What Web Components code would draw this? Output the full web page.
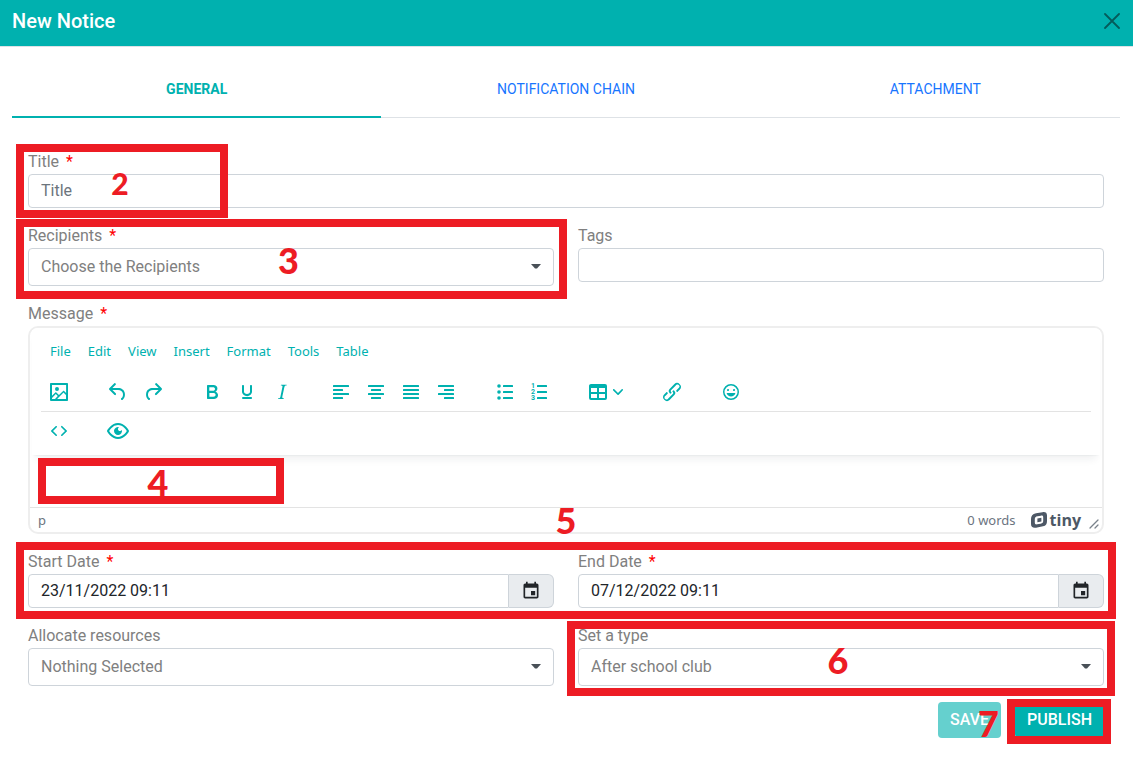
<!DOCTYPE html>
<html lang="en">
<head>
<meta charset="utf-8">
<meta name="viewport" content="width=device-width, initial-scale=1">
<title>New Notice</title>
<style>
  :root {
    --brand: #00b1af;
    --border: #ced4da;
    --muted: #808080;
    --ink: #212529;
    --mark: #ed1c24;
  }

  body {
    margin: 0;
    background: #fff;
    color: var(--ink);
    font: 16px/24px Roboto, "Liberation Sans", sans-serif;
  }

  .form {
    display: grid;
    grid-template-columns: 1fr 1fr;
    gap: 14px 24px;
    padding: 30px 16px 0;
  }

  .wide {
    grid-column: 1 / -1;
  }

  .dates {
    display: grid;
    grid-template-columns: 1fr 1fr;
    gap: 24px;
    position: relative;
  }

  .actions {
    display: flex;
    justify-content: flex-end;
    gap: 14px;
    padding: 16px 16px 24px;
  }

  /* how far each marker reaches round the thing it points at */
  .mark-title { top: -4px; left: -12px; width: 212px; height: 74px; }
  .mark-recipients { inset: -3px -13px -13px -12px; }
  .mark-message { top: 3px; left: 8px; width: 246px; height: 46px; background: #fff; }
  .mark-dates { inset: -6px -12px -11px; }
  .mark-type { inset: -1px -11px -10px; }
  .mark-publish { inset: -3px -7px -6px -8px; }
</style>
</head>
<body>

<notice-dialog heading="New Notice">
  <tab-bar tabs="General,Notification chain,Attachment"></tab-bar>

  <div class="form">
    <text-field class="wide" label="Title" placeholder="Title" required>
      <step-mark class="mark-title" number="2" size="small"></step-mark>
    </text-field>

    <select-field label="Recipients" value="Choose the Recipients" required>
      <step-mark class="mark-recipients" number="3"></step-mark>
    </select-field>
    <text-field label="Tags"></text-field>

    <message-editor class="wide" label="Message">
      <step-mark class="mark-message" number="4"></step-mark>
    </message-editor>

    <div class="wide dates">
      <date-field label="Start Date" value="23/11/2022 09:11" required></date-field>
      <date-field label="End Date" value="07/12/2022 09:11" required></date-field>
      <step-mark class="mark-dates" number="5" place="above"></step-mark>
    </div>

    <select-field label="Allocate resources" value="Nothing Selected"></select-field>
    <select-field label="Set a type" value="After school club">
      <step-mark class="mark-type" number="6"></step-mark>
    </select-field>
  </div>

  <div class="actions">
    <action-button label="SAVE" disabled></action-button>
    <action-button label="PUBLISH">
      <step-mark class="mark-publish" number="7" place="before"></step-mark>
    </action-button>
  </div>
</notice-dialog>

<script>
// shared by every labelled field
const labelStyles = `
  label { display: block; padding-top: 2px; color: var(--muted); line-height: 24px; }
  label span { color: #f00; margin-left: 7px; }
`;

const fieldStyles = `
  * { box-sizing: border-box; }
  :host { display: block; position: relative; min-width: 0; }
  ${labelStyles}
  input, select, button { font: inherit; margin: 0; }
  input {
    display: block;
    width: 100%;
    min-width: 0;
    height: 34px;
    padding: 0 12px 2px;
    border: 1px solid var(--border);
    border-radius: 4px;
    background: #fff;
    color: var(--ink);
  }
  input::placeholder { color: #6c757d; opacity: 1; }
`;

class BaseField extends HTMLElement {
  constructor() {
    super();
    this.attachShadow({ mode: "open" });
  }

  get label() {
    const star = this.hasAttribute("required") ? "<span>*</span>" : "";
    return `<label for="control">${this.getAttribute("label")}${star}</label>`;
  }

  connectedCallback() {
    this.shadowRoot.innerHTML = `<style>${fieldStyles}</style>${this.render()}<slot></slot>`;
  }
}

class TextField extends BaseField {
  render() {
    const placeholder = this.getAttribute("placeholder") || "";
    return `${this.label}<input id="control" type="text" placeholder="${placeholder}">`;
  }
}

class SelectField extends BaseField {
  render() {
    return `
      <style>
        .box { display: grid; align-items: center; }
        .box > * { grid-area: 1 / 1; }
        select {
          appearance: none;
          width: 100%;
          height: 38px;
          padding: 0 32px 0 12px;
          border: 1px solid var(--border);
          border-radius: 4px;
          background: #fff;
          color: var(--muted);
        }
        svg { justify-self: end; margin: 0 13px 2px 0; pointer-events: none; fill: #495057; }
      </style>
      ${this.label}
      <div class="box">
        <select id="control"><option>${this.getAttribute("value")}</option></select>
        <svg width="10" height="5" viewBox="0 0 10 5"><path d="M0 0h10L6 4.5H4z"/></svg>
      </div>`;
  }
}

class DateField extends BaseField {
  render() {
    return `
      <style>
        .box { display: flex; }
        input { border-radius: 4px 0 0 4px; }
        button {
          flex: none;
          display: grid;
          place-items: center;
          width: 45px;
          padding: 0;
          border: 1px solid var(--border);
          border-left: 0;
          border-radius: 0 6px 6px 0;
          background: #e9ecef;
          color: var(--ink);
        }
      </style>
      ${this.label}
      <div class="box">
        <input id="control" type="text" value="${this.getAttribute("value")}">
        <button type="button" aria-label="Pick a date">
          <svg width="20" height="20" viewBox="0 0 24 24" fill="currentColor"><path d="M17 12h-5v5h5v-5zM16 1v2H8V1H6v2H5c-1.1 0-2 .9-2 2v14c0 1.1.9 2 2 2h14c1.1 0 2-.9 2-2V5c0-1.1-.9-2-2-2h-1V1h-2zm3 18H5V8h14v11z"/></svg>
        </button>
      </div>`;
  }
}

class NoticeDialog extends HTMLElement {
  constructor() {
    super();
    this.attachShadow({ mode: "open" });
  }

  connectedCallback() {
    this.shadowRoot.innerHTML = `
      <style>
        :host { display: block; }
        header {
          display: flex;
          align-items: center;
          justify-content: space-between;
          height: 46px;
          padding: 0 13px 4px 12px;
          box-sizing: border-box;
          background: var(--brand);
          color: #fff;
          box-shadow: 0 1px #dee2e6;
        }
        h1 { margin: 0; font-size: 20px; font-weight: 500; line-height: 24px; }
        button { display: grid; padding: 0; border: 0; background: none; }
        main { padding: 16px 13px 0 12px; }
      </style>
      <header>
        <h1>${this.getAttribute("heading")}</h1>
        <button type="button" aria-label="Close">
          <svg width="16" height="16" viewBox="0 0 16 16" stroke="#045c5b" stroke-width="1.8" stroke-linecap="round"><path d="M1 1l14 14M15 1L1 15"/></svg>
        </button>
      </header>
      <main><slot></slot></main>
    `;
  }
}

class TabBar extends HTMLElement {
  constructor() {
    super();
    this.attachShadow({ mode: "open" });
  }

  connectedCallback() {
    const links = this.getAttribute("tabs")
      .split(",")
      .map((name, i) => `<a href="#tab${i}" class="${i === 0 ? "active" : ""}">${name.toUpperCase()}</a>`)
      .join("");

    this.shadowRoot.innerHTML = `
      <style>
        :host { display: block; }
        nav { display: flex; box-shadow: inset 0 -1px #dee2e6; }
        a {
          flex: 1;
          padding: 16px 0;
          border-bottom: 2px solid transparent;
          color: #1775ff;
          font-size: 14px;
          line-height: 22px;
          text-align: center;
          text-decoration: none;
        }
        .active { border-color: var(--brand); color: var(--brand); font-weight: 700; }
      </style>
      <nav>${links}</nav>
    `;
  }
}

class ActionButton extends HTMLElement {
  constructor() {
    super();
    this.attachShadow({ mode: "open" });
  }

  connectedCallback() {
    const disabled = this.hasAttribute("disabled") ? "disabled" : "";
    this.shadowRoot.innerHTML = `
      <style>
        :host { display: block; position: relative; }
        button {
          display: block;
          height: 36px;
          padding: 0 12px;
          border: 0;
          border-radius: 4px;
          background: var(--brand);
          color: #fff;
          font: inherit;
          font-weight: 500;
        }
        button:disabled { opacity: 0.6; }
      </style>
      <button type="button" ${disabled}>${this.getAttribute("label")}</button>
      <slot></slot>
    `;
  }
}

// red frame with its step number, laid over the element that holds it
class StepMark extends HTMLElement {
  constructor() {
    super();
    this.attachShadow({ mode: "open" });
  }

  connectedCallback() {
    this.shadowRoot.innerHTML = `
      <style>
        :host {
          position: absolute;
          z-index: 1;
          box-sizing: border-box;
          display: grid;
          place-content: center;
          border: 8px solid var(--mark);
          pointer-events: none;
        }
        b {
          color: var(--mark);
          font: 900 36px/36px Lato, "Open Sans", sans-serif;
          padding: 2px 6px 0 0;
        }
        :host([size="small"]) b { font-size: 30px; padding-right: 4px; padding-top: 4px; }
        :host([place="above"]) b { position: absolute; justify-self: center; bottom: 100%; margin-bottom: 12px; padding: 0; }
        :host([place="before"]) b { position: absolute; align-self: center; right: 100%; padding-right: 16px; }
      </style>
      <b>${this.getAttribute("number")}</b>
    `;
  }
}

const line = (x, y, w) => `<rect x="${x}" y="${y}" width="${w}" height="2" rx=".6"/>`;
const undoPath = "M6.4 8H12c3.7 0 6.2 2 6.8 5.1.6 2.7-.4 5.6-2.3 6.8a1 1 0 0 1-1-1.8c1.1-.6 1.8-2.7 1.4-4.6-.5-2.1-2.1-3.5-4.9-3.5H6.4l3.3 3.3a1 1 0 1 1-1.4 1.4l-5-5a1 1 0 0 1 0-1.4l5-5a1 1 0 0 1 1.4 1.4L6.4 8Z";

const icons = {
  image: `<path d="m5 15.7 3.3-3.2c.3-.3.7-.3 1 0L12 15l4.1-4c.3-.4.8-.4 1 0l2 1.9V5H5v10.7ZM5 18V19h3l2.8-2.9-2-2L5 17.9Zm14-3-2.5-2.4-6.4 6.5H19v-4ZM4 3h16c.6 0 1 .4 1 1v16c0 .6-.4 1-1 1H4a1 1 0 0 1-1-1V4c0-.6.4-1 1-1Zm6 8a2 2 0 1 0 0-4 2 2 0 0 0 0 4Z"/>`,
  undo: `<path d="${undoPath}"/>`,
  redo: `<path transform="matrix(-1 0 0 1 24 0)" d="${undoPath}"/>`,
  bold: `<path d="M7.8 19c-.3 0-.5 0-.6-.2l-.2-.5V5.7c0-.2 0-.4.2-.5l.6-.2h5c1.5 0 2.7.3 3.5 1 .7.6 1.1 1.4 1.1 2.5a3 3 0 0 1-.6 1.9c-.4.6-1 1-1.6 1.2.4.1.9.3 1.3.6s.8.7 1 1.2c.4.4.5 1 .5 1.6 0 1.3-.4 2.3-1.3 3-.8.7-2.1 1-3.8 1H7.8Zm5-8.3c.6 0 1.2-.1 1.6-.5.4-.3.6-.7.6-1.3 0-1.1-.8-1.7-2.3-1.7H9.3v3.5h3.4Zm.5 6c.7 0 1.3-.1 1.7-.4.4-.4.6-.9.6-1.5s-.2-1-.7-1.4c-.4-.3-1-.4-2-.4H9.4v3.8h4Z"/>`,
  underline: `<path d="M16 5c.6 0 1 .4 1 1v5.5a4 4 0 0 1-.4 1.8l-1 1.4a5.3 5.3 0 0 1-5.5 1 5 5 0 0 1-1.6-1c-.5-.4-.8-.9-1.1-1.4a4 4 0 0 1-.4-1.8V6c0-.6.4-1 1-1s1 .4 1 1v5.5c0 .3 0 .6.2 1l.6.7a3.3 3.3 0 0 0 2.2.8 3.4 3.4 0 0 0 2.2-.8c.3-.2.4-.5.6-.8l.2-.9V6c0-.6.4-1 1-1ZM8 17h8c.6 0 1 .4 1 1s-.4 1-1 1H8a1 1 0 0 1 0-2Z"/>`,
  italic: `<path d="m16.7 4.7-.1.9h-.3c-.6 0-1 0-1.4.3-.3.3-.4.6-.5 1.1l-2.1 9.8v.6c0 .5.4.8 1.4.8h.2l-.2.8H8l.2-.8h.2c1.1 0 1.8-.5 2-1.5l2-9.8.1-.5c0-.6-.4-.8-1.4-.8h-.3l.2-.9h5.8Z"/>`,
  left: line(4, 5, 16) + line(4, 9, 10) + line(4, 13, 16) + line(4, 17, 10),
  center: line(4, 5, 16) + line(7, 9, 10) + line(4, 13, 16) + line(7, 17, 10),
  justify: line(4, 5, 16) + line(4, 9, 16) + line(4, 13, 16) + line(4, 17, 16),
  right: line(4, 5, 16) + line(10, 9, 10) + line(4, 13, 16) + line(10, 17, 10),
  bullets: line(10, 5, 10) + line(10, 11, 10) + line(10, 17, 10) + `<circle cx="6" cy="6" r="1.8"/><circle cx="6" cy="12" r="1.8"/><circle cx="6" cy="18" r="1.8"/>`,
  numbers: line(9, 5, 10) + line(9, 11, 10) + line(9, 17, 10) + `<g font-family="Roboto, sans-serif" font-size="7" font-weight="700"><text x="3" y="8">1</text><text x="3" y="14">2</text><text x="3" y="20">3</text></g>`,
  table: `<path fill-rule="evenodd" d="M19 4a2 2 0 0 1 2 2v12a2 2 0 0 1-2 2H5a2 2 0 0 1-2-2V6c0-1.1.9-2 2-2h14ZM5 14v4h6v-4H5Zm14 0h-6v4h6v-4Zm0-6h-6v4h6V8ZM5 12h6V8H5v4Z"/>`,
  link: `<path d="M6.2 12.3a1 1 0 0 1 1.4 1.4l-2 2a2 2 0 1 0 2.6 2.8l4.8-4.8a1 1 0 0 0 0-1.4 1 1 0 1 1 1.4-1.3 2.9 2.9 0 0 1 0 4L9.6 20a3.9 3.9 0 0 1-5.5-5.5l2-2Zm11.6-.6a1 1 0 0 1-1.4-1.4l2-2a2 2 0 1 0-2.6-2.8L11 10.3a1 1 0 0 0 0 1.4A1 1 0 1 1 9.6 13a2.9 2.9 0 0 1 0-4L14.4 4a3.9 3.9 0 0 1 5.5 5.5l-2 2Z"/>`,
  emoji: `<path d="M9 11c.6 0 1-.4 1-1s-.4-1-1-1a1 1 0 0 0-1 1c0 .6.4 1 1 1Zm6 0c.6 0 1-.4 1-1s-.4-1-1-1a1 1 0 0 0-1 1c0 .6.4 1 1 1Zm-3 5.5c2.1 0 4-1.5 4.4-3.5H7.6c.5 2 2.3 3.5 4.4 3.5ZM12 4a8 8 0 1 0 0 16 8 8 0 0 0 0-16Zm0 14.5a6.5 6.5 0 1 1 0-13 6.5 6.5 0 0 1 0 13Z"/>`,
  code: `<path d="M9.8 15.7c.3.3.3.8 0 1-.3.4-.9.4-1.2 0l-4.4-4.1a.8.8 0 0 1 0-1.2l4.4-4.2c.3-.3.9-.3 1.2 0 .3.3.3.8 0 1.1L6 12l3.8 3.7ZM14.2 15.7c-.3.3-.3.8 0 1 .4.4.9.4 1.2 0l4.4-4.1c.3-.3.3-.9 0-1.2l-4.4-4.2a.8.8 0 0 0-1.2 0c-.3.3-.3.8 0 1.1L18 12l-3.8 3.7Z"/>`,
  preview: `<path d="M3.5 12.5c.5.8 1.1 1.6 1.8 2.3 2 2 4.2 3.2 6.7 3.2s4.7-1.2 6.7-3.2a16.2 16.2 0 0 0 2.1-2.8 15.7 15.7 0 0 0-2.1-2.8c-2-2-4.2-3.2-6.7-3.2a9.3 9.3 0 0 0-6.7 3.2A16.2 16.2 0 0 0 3.2 12c0 .2.2.3.3.5Zm-2.4-1 .7-1.2L4 7.8C6.2 5.4 8.9 4 12 4c3 0 5.8 1.4 8.1 3.8a18.2 18.2 0 0 1 2.8 3.7v1l-.7 1.2a18.2 18.2 0 0 1-2.1 2.5c-2.3 2.4-5 3.8-8.1 3.8-3 0-5.8-1.4-8.1-3.8a18.2 18.2 0 0 1-2.8-3.7 1 1 0 0 1 0-1Zm12-3.3a2 2 0 1 0 2.7 2.6 4 4 0 1 1-2.6-2.6Z"/>`,
};

class ToolButton extends HTMLElement {
  constructor() {
    super();
    this.attachShadow({ mode: "open" });
  }

  connectedCallback() {
    const name = this.getAttribute("icon");
    const arrow = this.hasAttribute("menu")
      ? `<svg width="10" height="10" viewBox="0 0 10 10"><path d="M8.7 2.2c.3-.3.8-.3 1 0 .4.4.4.9 0 1.2L5.7 7.8c-.3.3-.9.3-1.2 0L.2 3.4a.8.8 0 0 1 0-1.2c.3-.3.8-.3 1.1 0L5 6l3.7-3.8Z"/></svg>`
      : "";
    this.shadowRoot.innerHTML = `
      <style>
        :host { display: block; }
        button {
          display: flex;
          align-items: center;
          justify-content: center;
          gap: 3px;
          box-sizing: border-box;
          min-width: 34px;
          height: 34px;
          padding: 0 5px;
          border: 0;
          background: none;
          color: var(--brand);
        }
        :host([menu]) button { padding: 0 7px 0 4px; }
        svg { fill: currentColor; }
      </style>
      <button type="button" aria-label="${name}">
        <svg width="24" height="24" viewBox="0 0 24 24">${icons[name]}</svg>${arrow}
      </button>
    `;
  }
}

class MessageEditor extends HTMLElement {
  constructor() {
    super();
    this.attachShadow({ mode: "open" });
  }

  group(names) {
    const buttons = names
      .map((name) => `<tool-button icon="${name}" ${name === "table" ? "menu" : ""}></tool-button>`)
      .join("");
    return `<div class="group">${buttons}</div>`;
  }

  connectedCallback() {
    const menus = ["File", "Edit", "View", "Insert", "Format", "Tools", "Table"];
    const rowOne = [
      ["image"],
      ["undo", "redo"],
      ["bold", "underline", "italic"],
      ["left", "center", "justify", "right"],
      ["bullets", "numbers"],
      ["table"],
      ["link"],
      ["emoji"],
    ];
    const rowTwo = [["code"], ["preview"]];

    this.shadowRoot.innerHTML = `
      <style>
        * { box-sizing: border-box; }
        :host { display: block; }
        ${labelStyles}
        .editor { border: 2px solid #eee; border-radius: 10px; overflow: hidden; }
        .head {
          position: relative;
          z-index: 1;
          margin: 0 2px;
          padding: 0 9px 5px;
          background: #fff;
          box-shadow: 0 2px 2px -2px rgba(34, 47, 62, 0.1), 0 8px 8px -4px rgba(34, 47, 62, 0.07);
        }
        .menus { display: flex; align-items: center; gap: 17px; height: 46px; padding: 0 9px; }
        .menus button {
          padding: 0;
          border: 0;
          background: none;
          color: var(--brand);
          font: 13px/24px "Noto Sans", sans-serif;
        }
        .row { display: flex; align-items: center; gap: 25px; height: 38px; padding: 0 1px; }
        .row:nth-child(2) { padding-bottom: 1px; border-bottom: 1px solid #e3e3e3; }
        .group { display: flex; gap: 1px; }
        .body { position: relative; height: 52px; }
        textarea {
          display: block;
          width: 100%;
          height: 100%;
          padding: 12px;
          border: 0;
          resize: none;
          font: inherit;
        }
        .status {
          display: flex;
          align-items: center;
          height: 25px;
          padding: 0 3px 0 8px;
          border-top: 1px solid #e3e3e3;
          color: #6b7480;
          font: 13px/24px "Noto Sans", sans-serif;
        }
        .words { margin-left: auto; }
        .tiny {
          display: flex;
          align-items: center;
          gap: 3px;
          margin: 0 8px 0 15px;
          color: #4d5866;
          font: 700 16px/22px "Open Sans", sans-serif;
          text-decoration: none;
        }
        .grip { align-self: flex-end; margin-bottom: 3px; }
      </style>
      <label for="message">${this.getAttribute("label")}<span>*</span></label>
      <div class="editor">
        <div class="head">
          <div class="menus">${menus.map((m) => `<button type="button">${m}</button>`).join("")}</div>
          <div class="row">${rowOne.map(this.group).join("")}</div>
          <div class="row">${rowTwo.map(this.group).join("")}</div>
        </div>
        <div class="body">
          <textarea id="message"></textarea>
          <slot></slot>
        </div>
        <div class="status">
          <span>p</span>
          <span class="words">0 words</span>
          <a class="tiny" href="#tiny">
            <svg width="16" height="16" viewBox="0 0 16 16">
              <path fill="currentColor" fill-rule="evenodd" d="M5 1.200 11.500.2C14.500-.2 16 1 16 3.500V9c0 2.800-1 4.800-4 5.300L5 15.700C1.800 16.200 0 15 0 12V7c0-3.200 1.500-5.200 5-5.800ZM6.500 4.200C4.600 4.500 3.800 5.400 3.800 7.200v3.300c0 1.600.8 2.100 2.400 1.800l3.400-.6c1.900-.4 2.600-1.300 2.600-3V5.400c0-1.400-.7-2-2.300-1.700Z"/>
              <path fill="currentColor" d="m6.400 6.600 4-.8v3.700l-4 .8z"/>
            </svg>
            <span>tiny</span>
          </a>
          <svg class="grip" width="10" height="10" viewBox="0 0 10 10" stroke="#7a828b" stroke-width="1.3" stroke-linecap="round"><path d="M1 9l8-8M6 9l3-3"/></svg>
        </div>
      </div>
    `;
  }
}

customElements.define("notice-dialog", NoticeDialog);
customElements.define("tab-bar", TabBar);
customElements.define("text-field", TextField);
customElements.define("select-field", SelectField);
customElements.define("date-field", DateField);
customElements.define("tool-button", ToolButton);
customElements.define("message-editor", MessageEditor);
customElements.define("action-button", ActionButton);
customElements.define("step-mark", StepMark);
</script>
</body>
</html>
